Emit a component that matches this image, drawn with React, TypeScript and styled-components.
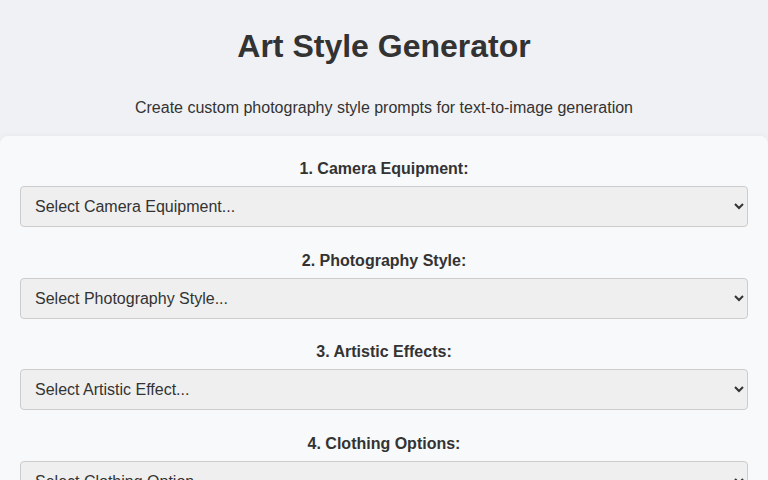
import styled, { createGlobalStyle } from "styled-components";

const GlobalStyle = createGlobalStyle`
  body {
    margin: 0;
    background-color: #f0f1f4;
    font-family: "Liberation Sans", Arial, sans-serif;
    color: #333;
  }
`;

interface Step {
  label: string;
  placeholder: string;
}

const Steps: Step[] = [
  { label: "1. Camera Equipment:", placeholder: "Select Camera Equipment..." },
  { label: "2. Photography Style:", placeholder: "Select Photography Style..." },
  { label: "3. Artistic Effects:", placeholder: "Select Artistic Effect..." },
  { label: "4. Clothing Options:", placeholder: "Select Clothing Option..." },
];

const Page = styled.div`
  display: flex;
  flex-direction: column;
`;

const Header = styled.header`
  text-align: center;
  padding-top: 28px;
`;

const Title = styled.h1`
  margin: 0;
  font-size: 32px;
  font-weight: bold;
  color: #333;
  line-height: 37px;
`;

const Subtitle = styled.p`
  margin: 34px 0 0;
  font-size: 16px;
  color: #333;
  line-height: 18px;
  padding-bottom: 19px;
`;

const Card = styled.main`
  background-color: #f8f9fa;
  border-radius: 8px;
  box-shadow: 0 0 6px rgba(0, 0, 0, 0.05);
  padding: 23px 20px 20px;
`;

const Group = styled.div`
  margin-bottom: 23.7px;
`;

const Label = styled.label`
  display: block;
  text-align: center;
  font-size: 16px;
  font-weight: bold;
  color: #333;
  line-height: 19px;
  margin-bottom: 8px;
`;

const Select = styled.select`
  display: block;
  width: 100%;
  height: 41px;
  padding: 0 10px;
  font-family: "Liberation Sans", Arial, sans-serif;
  font-size: 16px;
  color: #333;
  background-color: #efefef;
  border: 1px solid #ccc;
  border-radius: 4px;
`;

export default function App() {
  return (
    <Page>
      <GlobalStyle />
      <Header>
        <Title>Art Style Generator</Title>
        <Subtitle>Create custom photography style prompts for text-to-image generation</Subtitle>
      </Header>
      <Card>
        {Steps.map((step) => (
          <Group key={step.label}>
            <Label>{step.label}</Label>
            <Select defaultValue="">
              <option value="">{step.placeholder}</option>
            </Select>
          </Group>
        ))}
      </Card>
    </Page>
  );
}
